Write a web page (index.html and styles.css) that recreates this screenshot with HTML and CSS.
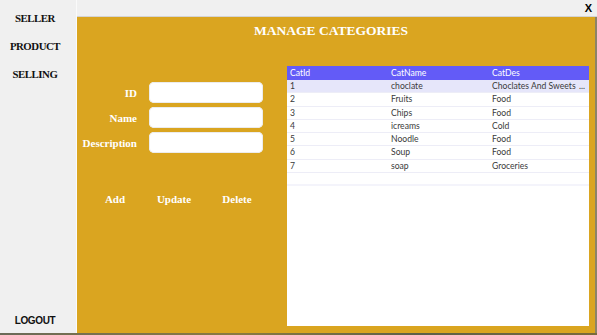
FILE: index.html
```html
<!DOCTYPE html>
<html>
<head>
<meta charset="utf-8">
<link rel="stylesheet" href="styles.css">
</head>
<body>
<div class="app">
  <nav class="sidebar">
    <div class="nav-item">SELLER</div>
    <div class="nav-item">PRODUCT</div>
    <div class="nav-item">SELLING</div>
    <div class="nav-item logout">LOGOUT</div>
  </nav>
  <div class="main">
    <div class="topbar"><span class="close">X</span></div>
    <section class="panel">
      <h1 class="title">MANAGE CATEGORIES</h1>
      <div class="body">
        <div class="form-area">
          <div class="form">
            <label class="lbl">ID</label><div class="input"></div>
            <label class="lbl">Name</label><div class="input"></div>
            <label class="lbl">Description</label><div class="input"></div>
          </div>
          <div class="buttons">
            <span class="btn">Add</span>
            <span class="btn">Update</span>
            <span class="btn">Delete</span>
          </div>
        </div>
        <div class="grid">
          <div class="row head"><span>CatId</span><span>CatName</span><span>CatDes</span></div>
          <div class="row sel"><span>1</span><span>choclate</span><span class="trunc">Choclates And Sweets<i>...</i></span></div>
          <div class="row"><span>2</span><span>Fruits</span><span>Food</span></div>
          <div class="row"><span>3</span><span>Chips</span><span>Food</span></div>
          <div class="row"><span>4</span><span>icreams</span><span>Cold</span></div>
          <div class="row"><span>5</span><span>Noodle</span><span>Food</span></div>
          <div class="row"><span>6</span><span>Soup</span><span>Food</span></div>
          <div class="row"><span>7</span><span>soap</span><span>Groceries</span></div>
          <div class="row empty"><span></span><span></span><span></span></div>
        </div>
      </div>
    </section>
  </div>
</div>
<div class="desk"></div>
</body>
</html>
```

FILE: styles.css
```css
html, body { margin: 0; padding: 0; }
body {
  width: 597px;
  height: 335px;
  overflow: hidden;
  background: #f0f0f0;
}
.app {
  display: flex;
  height: 333px;
}
.sidebar {
  width: 77px;
  border-right: 1px solid #fafafa;
  display: flex;
  flex-direction: column;
  align-items: center;
  padding: 12px 6px 6px 0;
  box-sizing: border-box;
  gap: 16px;
}
.nav-item {
  font-family: "Liberation Serif", serif;
  font-weight: bold;
  font-size: 10.8px;
  letter-spacing: -0.45px;
  line-height: 12px;
  color: #111;
}
.nav-item.logout {
  margin-top: auto;
  font-family: "Liberation Sans", sans-serif;
  font-size: 10px;
  letter-spacing: -0.35px;
}
.main {
  flex: 1;
  display: flex;
  flex-direction: column;
}
.topbar {
  height: 17px;
  display: flex;
  justify-content: flex-end;
  align-items: center;
  padding-right: 5px;
  border-bottom: 1px solid #d4d4d4;
  box-sizing: border-box;
}
.close {
  font-family: "Liberation Sans", sans-serif;
  font-weight: bold;
  font-size: 11px;
  color: #000;
}
.panel {
  flex: 1;
  background: #daa520;
  border-right: 2px solid #8c8466;
  display: flex;
  flex-direction: column;
}
.title {
  margin: 0;
  padding: 5px 10px 17px 0;
  height: 26px;
  box-sizing: content-box;
  text-align: center;
  font-family: "Liberation Serif", serif;
  font-weight: bold;
  font-size: 13.5px;
  line-height: 18px;
  color: #fff;
}
.body {
  flex: 1;
  display: flex;
  padding-bottom: 7px;
}
.form-area {
  width: 210px;
  padding-top: 17px;
}
.form {
  display: grid;
  grid-template-columns: 60px 114px;
  column-gap: 12px;
  row-gap: 4px;
  align-items: center;
}
.lbl {
  text-align: right;
  font-family: "Liberation Serif", serif;
  font-weight: bold;
  font-size: 11px;
  color: #fff;
  white-space: nowrap;
}
.input {
  height: 21px;
  background: #fff;
  border-radius: 5px;
  box-shadow: inset 0 0 0 1px #ececec;
}
.buttons {
  display: grid;
  grid-template-columns: 60px 58px 68px;
  margin: 40px 0 0 8px;
}
.btn {
  text-align: center;
  font-family: "Liberation Serif", serif;
  font-weight: bold;
  font-size: 11px;
  color: #fff;
}
.grid {
  width: 302px;
  background: #fff;
  margin-top: 1px;
}
.row {
  display: grid;
  grid-template-columns: 101px 101px 100px;
  height: 13.3px;
  box-sizing: border-box;
  border-bottom: 1px solid #ededf7;
  font-family: Lato, sans-serif;
  font-size: 8.6px;
  line-height: 12px;
  color: #3a3a3a;
}
.row span {
  padding-left: 3px;
  white-space: nowrap;
  overflow: hidden;
}
.row.head {
  height: 14px;
  background: #635bf7;
  color: #fff;
  border-bottom: none;
  line-height: 14px;
}
.row.sel { background: #e6e6fa; }
.trunc {
  display: flex;
  justify-content: space-between;
  padding-right: 4px;
}
.trunc i { font-style: normal; }
.row.empty { border-bottom: 2px solid #f4f4fb; height: 12.5px; }
.desk {
  height: 2px;
  background: linear-gradient(90deg, #6a6a58, #8a7a40 40%, #5b6048 70%, #7a6a3a);
}
```
